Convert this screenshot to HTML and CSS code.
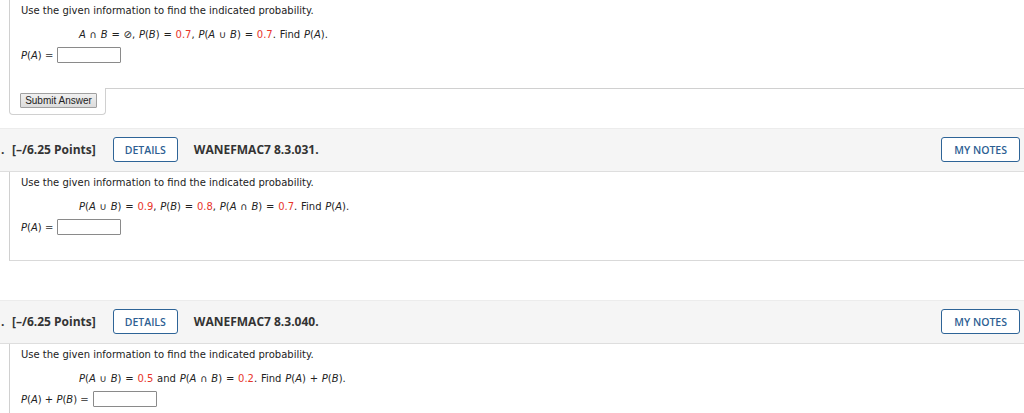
FILE: index.html
```html
<!DOCTYPE html>
<html>
<head>
<meta charset="utf-8">
<link rel="stylesheet" href="styles.css">
</head>
<body>
<div class="qbody first">
  <div class="line">Use the given information to find the indicated probability.</div>
  <div class="eq"><i>A</i> ∩ <i>B</i> = ⊘, <i>P</i>(<i>B</i>) = <span class="red">0.7</span>, <i>P</i>(<i>A</i> ∪ <i>B</i>) = <span class="red">0.7</span>. Find <i>P</i>(<i>A</i>).</div>
  <div class="ans"><span><i>P</i>(<i>A</i>) <span class="eqs">=</span></span><span class="input"></span></div>
</div>
<div class="tabrow">
  <div class="tab"><button class="submit">Submit Answer</button></div>
  <div class="fill"></div>
</div>

<div class="head">
  <span class="num">.</span>
  <span class="pts">[–/6.25 Points]</span>
  <span class="btn">DETAILS</span>
  <span class="code">WANEFMAC7 8.3.031.</span>
  <span class="spacer"></span>
  <span class="btn notes">MY NOTES</span>
</div>
<div class="qbody boxed">
  <div class="line">Use the given information to find the indicated probability.</div>
  <div class="eq"><i>P</i>(<i>A</i> ∪ <i>B</i>) = <span class="red">0.9</span>, <i>P</i>(<i>B</i>) = <span class="red">0.8</span>, <i>P</i>(<i>A</i> ∩ <i>B</i>) = <span class="red">0.7</span>. Find <i>P</i>(<i>A</i>).</div>
  <div class="ans"><span><i>P</i>(<i>A</i>) <span class="eqs">=</span></span><span class="input"></span></div>
</div>

<div class="head h3">
  <span class="num">.</span>
  <span class="pts">[–/6.25 Points]</span>
  <span class="btn">DETAILS</span>
  <span class="code">WANEFMAC7 8.3.040.</span>
  <span class="spacer"></span>
  <span class="btn notes">MY NOTES</span>
</div>
<div class="qbody">
  <div class="line">Use the given information to find the indicated probability.</div>
  <div class="eq"><i>P</i>(<i>A</i> ∪ <i>B</i>) = <span class="red">0.5</span> and <i>P</i>(<i>A</i> ∩ <i>B</i>) = <span class="red">0.2</span>. Find <i>P</i>(<i>A</i>) + <i>P</i>(<i>B</i>).</div>
  <div class="ans"><span><i>P</i>(<i>A</i>) + <i>P</i>(<i>B</i>) <span class="eqs">=</span></span><span class="input"></span></div>
</div>
</body>
</html>
```
FILE: styles.css
```css
html, body { margin: 0; padding: 0; background: #fff; }
body { width: 1024px; height: 413px; overflow: hidden; font-family: "DejaVu Sans", Verdana, sans-serif; font-size: 10px; color: #222; }
.qbody { margin-left: 9px; border-left: 1px solid #d0d0d0; padding: 4px 0 25px 11px; }
.qbody.first { padding-top: 4px; }
.qbody.boxed { border-bottom: 1px solid #d9d9d9; padding-bottom: 25px; margin-bottom: 39px; }
.line { height: 14px; line-height: 14px; }
.eq { height: 14px; line-height: 14px; margin-top: 10px; padding-left: 58px; word-spacing: 0.6px; }
.ans { display: flex; align-items: center; gap: 4px; margin-top: 5px; height: 16px; }
.eqs { color: #555; }
.red { color: #e8352a; }
i { font-style: italic; }
.input { display: inline-block; width: 62px; height: 14px; border: 1px solid #8a8a8a; border-radius: 1px; background: #fff; }
.tabrow { display: flex; height: 27px; }
.tab { margin-left: 9px; width: 97px; border: 1px solid #d0d0d0; border-top: none; border-radius: 0 0 4px 4px; padding: 5px 0 0 10px; box-sizing: border-box; }
.fill { flex: 1; border-top: 1px solid #d0d0d0; }
.submit { height: 15px; width: 77px; padding: 0; font-family: "Liberation Sans", Arial, sans-serif; font-size: 10px; color: #222; background: linear-gradient(#f0f0f0, #dcdcdc); border: 1px solid #a0a0a0; border-radius: 1px; line-height: 13px; }
.head { margin-top: 13px; height: 41px; padding-bottom: 1px; background: #f5f5f5; border-top: 1px solid #ececec; border-bottom: 1px solid #dedede; display: flex; align-items: center; font-family: "Open Sans", "Noto Sans", sans-serif; color: #333; box-sizing: content-box; }
.head.h3 { margin-top: 0; }
.num { font-weight: 700; font-size: 12px; margin-left: 1px; width: 8px; flex: none; }
.pts { font-weight: 700; font-size: 12px; margin-left: 3px; }
.btn { display: inline-flex; align-items: center; justify-content: center; height: 23px; border: 1px solid #2e6497; border-radius: 3px; color: #2e5f93; font-size: 10.5px; font-weight: 600; background: #fff; padding: 0 11px; margin-left: 17px; }
.code { font-weight: 700; font-size: 12px; margin-left: 16px; }
.spacer { flex: 1; }
.notes { margin-right: 4px; padding: 0 12px; }
```
